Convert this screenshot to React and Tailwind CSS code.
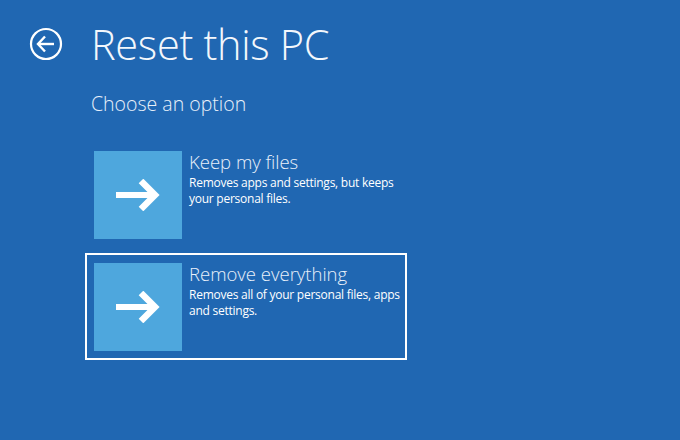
import React from "react";

function Arrow() {
  return (
    <svg width="44" height="32" viewBox="0 0 44 32">
      <rect x="0" y="13" width="37" height="6" fill="#fff" />
      <polyline points="25,2 39,16 25,30" fill="none" stroke="#fff" strokeWidth="6.5" strokeLinejoin="miter" strokeMiterlimit="10" />
    </svg>
  );
}

function BackIcon() {
  return (
    <svg width="34" height="34" viewBox="0 0 34 34">
      <circle cx="17" cy="17" r="15" fill="none" stroke="#fff" strokeWidth="2.2" />
      <line x1="9" y1="17" x2="25" y2="17" stroke="#fff" strokeWidth="2.4" />
      <polyline points="16,9.5 9,17 16,24.5" fill="none" stroke="#fff" strokeWidth="2.4" />
    </svg>
  );
}

function Option({ title, desc, selected }) {
  return (
    <div
      className={
        "flex w-[322px] h-[107px] px-[7px] pt-[8px] border-2 " +
        (selected ? "border-white" : "border-transparent")
      }
    >
      <div className="w-[88px] h-[88px] bg-[#4ea7dd] flex items-center justify-center shrink-0">
        <Arrow />
      </div>
      <div className="pl-[7px] text-white">
        <div className="text-[18.5px] leading-[22px] font-light text-[#e8f0fa]">{title}</div>
        <div className="text-[12px] leading-[16px] mt-[2px] w-[218px] tracking-[-0.25px]">{desc}</div>
      </div>
    </div>
  );
}

export default function App() {
  return (
    <div
      className="w-[680px] h-[440px] bg-[#2067b2] text-white overflow-hidden"
      style={{ fontFamily: '"Open Sans", "Noto Sans", sans-serif' }}
    >
      <div className="flex items-center pl-[29px] pt-[19px]">
        <BackIcon />
        <div className="ml-[28px] text-[41.5px] leading-[50px] font-light tracking-[-0.3px] text-[#f3f7fc]">Reset this PC</div>
      </div>
      <div className="pl-[91px] mt-[23px] text-[19.5px] leading-[24px] font-light text-[#e8f0fa]">Choose an option</div>
      <div className="pl-[85px] mt-[25px] flex flex-col gap-[5px]">
        <Option title="Keep my files" desc="Removes apps and settings, but keeps your personal files." />
        <Option title="Remove everything" desc="Removes all of your personal files, apps and settings." selected />
      </div>
    </div>
  );
}
